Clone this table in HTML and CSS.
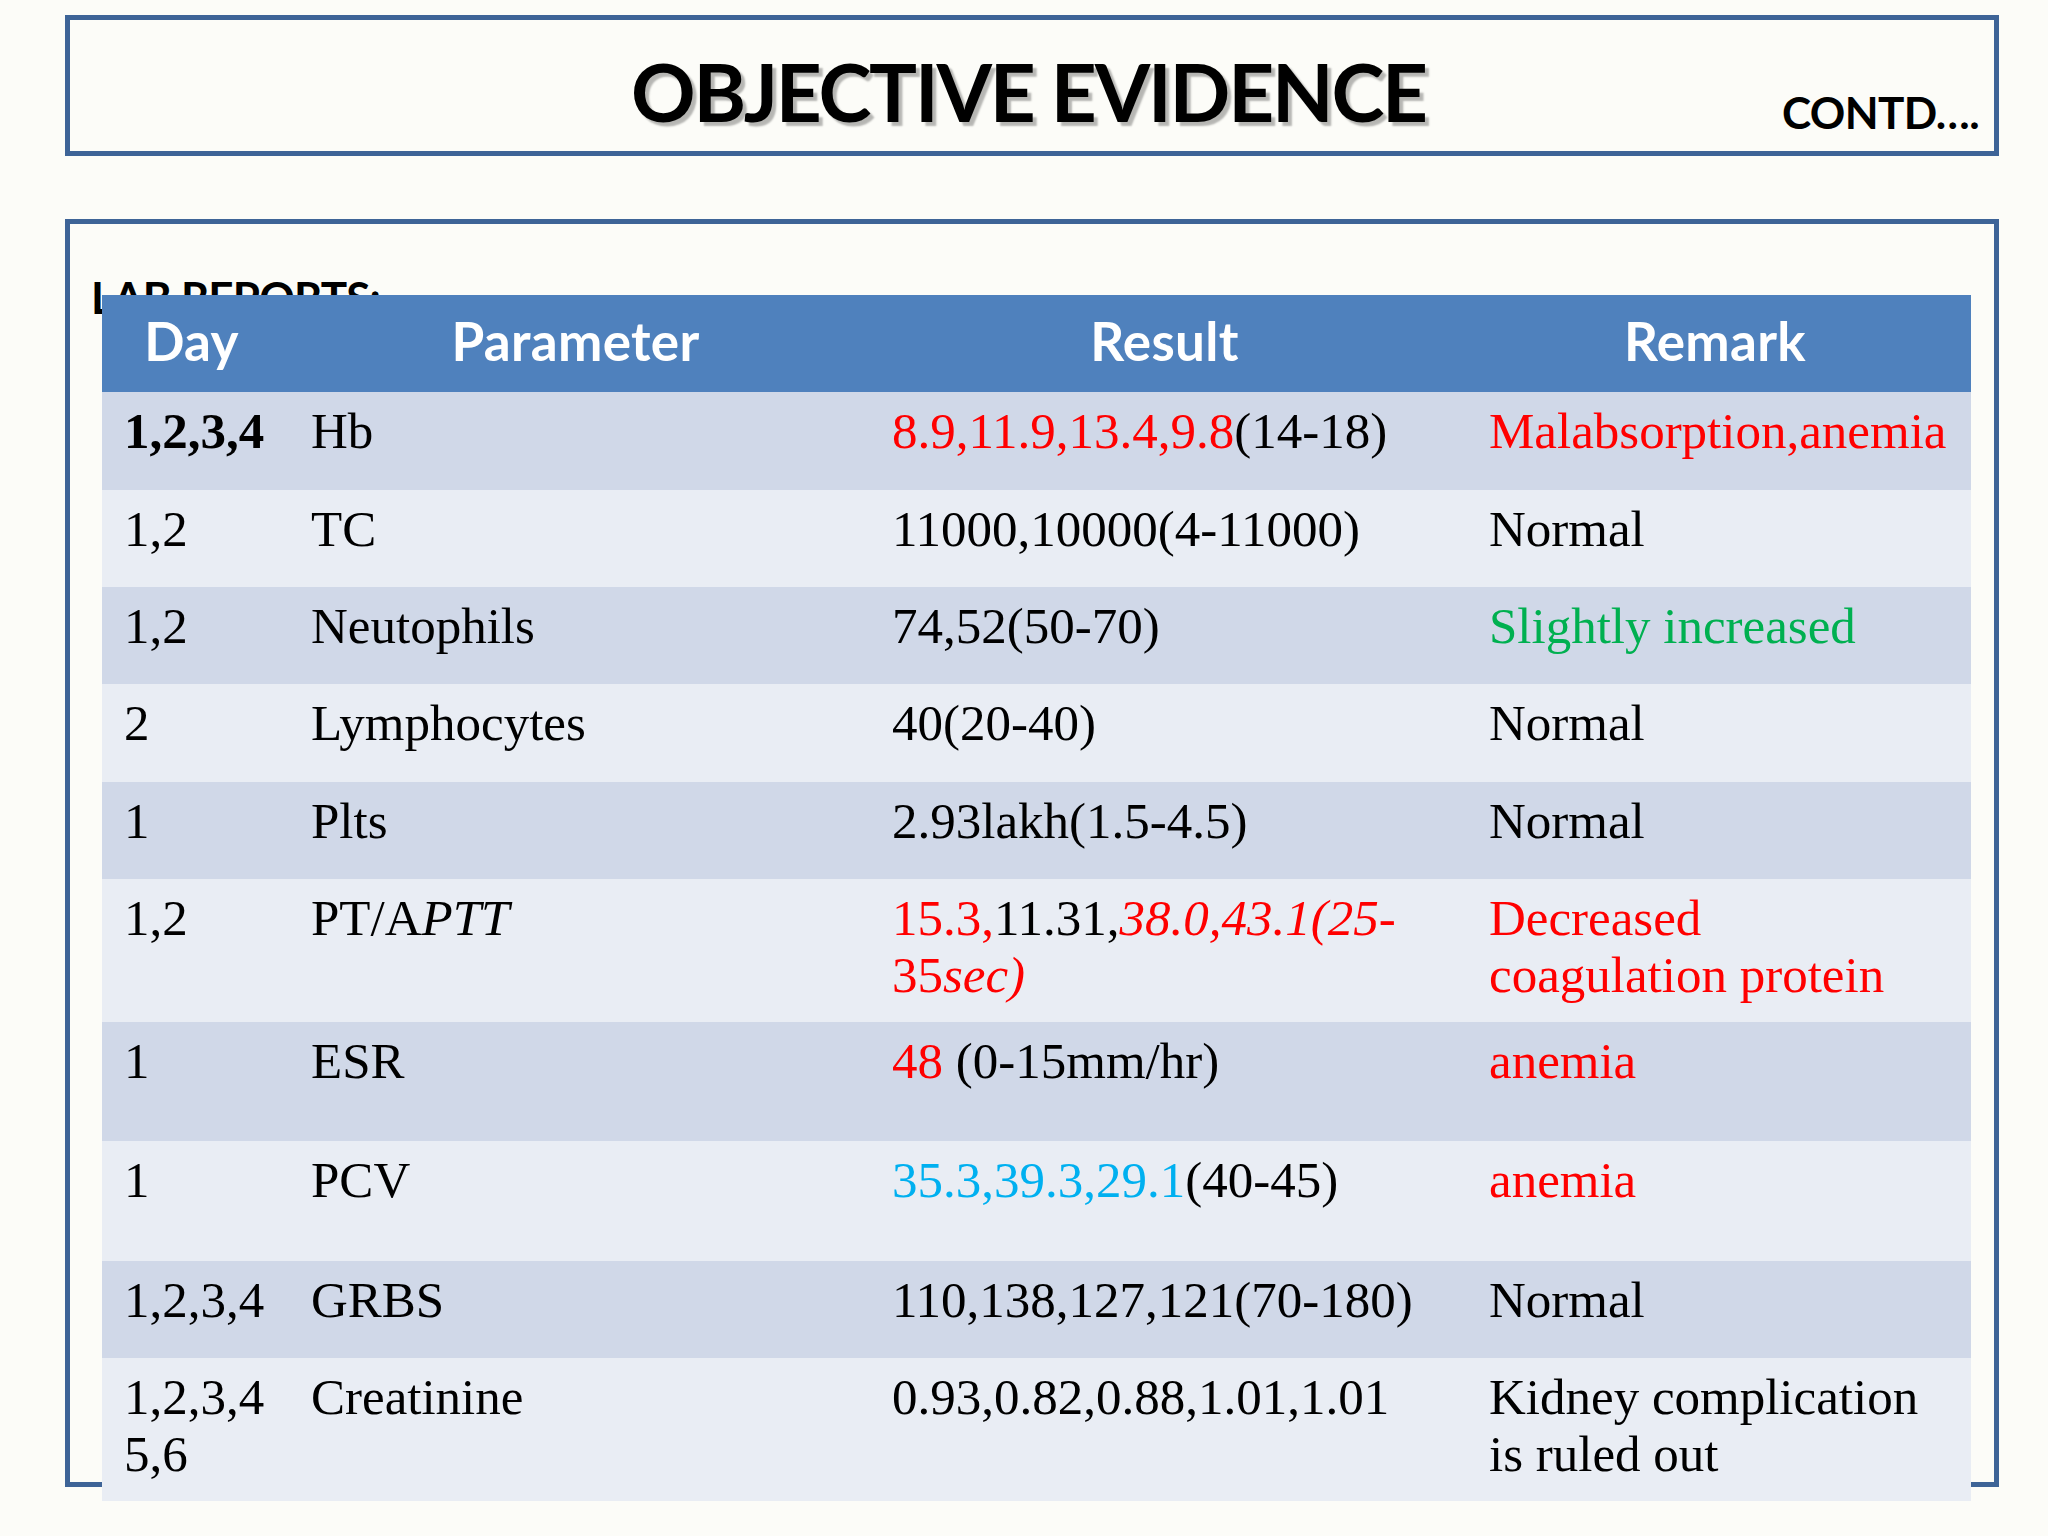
FILE: index.html
```html
<!DOCTYPE html>
<html lang="en">
<head>
<meta charset="utf-8">
<title>Objective Evidence</title>
<link rel="stylesheet" href="styles.css">
</head>
<body>
<div class="slide">
  <header class="title-box">
    <div class="title-spacer"></div>
    <h1 class="title">OBJECTIVE EVIDENCE</h1>
    <div class="contd">CONTD….</div>
  </header>

  <section class="content-box">
    <div class="lab-label">LAB REPORTS:</div>
    <table class="lab-table">
      <colgroup>
        <col class="c-day">
        <col class="c-param">
        <col class="c-result">
        <col class="c-remark">
      </colgroup>
      <thead>
        <tr class="head-row">
          <th>Day</th>
          <th>Parameter</th>
          <th>Result</th>
          <th>Remark</th>
        </tr>
      </thead>
      <tbody>
        <tr class="dark h98">
          <td><b>1,2,3,4</b></td>
          <td>Hb</td>
          <td class="nw"><span class="red">8.9,11.9,13.4,9.8</span>(14-18)</td>
          <td class="nw red">Malabsorption,anemia</td>
        </tr>
        <tr class="light h97">
          <td>1,2</td>
          <td>TC</td>
          <td class="nw">11000,10000(4-11000)</td>
          <td>Normal</td>
        </tr>
        <tr class="dark h97">
          <td>1,2</td>
          <td>Neutophils</td>
          <td>74,52(50-70)</td>
          <td class="nw green">Slightly increased</td>
        </tr>
        <tr class="light h98">
          <td>2</td>
          <td>Lymphocytes</td>
          <td>40(20-40)</td>
          <td>Normal</td>
        </tr>
        <tr class="dark h97">
          <td>1</td>
          <td>Plts</td>
          <td>2.93lakh(1.5-4.5)</td>
          <td>Normal</td>
        </tr>
        <tr class="light h143">
          <td>1,2</td>
          <td>PT/A<i>PTT</i></td>
          <td><span class="red">15.3,</span>11.31,<i class="red">38.0,43.1(25-</i><br><span class="red">35</span><i class="red">sec)</i></td>
          <td class="red">Decreased<br>coagulation protein</td>
        </tr>
        <tr class="dark h119">
          <td>1</td>
          <td>ESR</td>
          <td><span class="red">48</span> (0-15mm/hr)</td>
          <td class="red">anemia</td>
        </tr>
        <tr class="light h120">
          <td>1</td>
          <td>PCV</td>
          <td><span class="cyan">35.3,39.3,29.1</span>(40-45)</td>
          <td class="red">anemia</td>
        </tr>
        <tr class="dark h97">
          <td>1,2,3,4</td>
          <td>GRBS</td>
          <td class="nw">110,138,127,121(70-180)</td>
          <td>Normal</td>
        </tr>
        <tr class="light h143">
          <td>1,2,3,4<br>5,6</td>
          <td>Creatinine</td>
          <td class="nw">0.93,0.82,0.88,1.01,1.01</td>
          <td>Kidney complication<br>is ruled out</td>
        </tr>
      </tbody>
    </table>
  </section>
</div>
</body>
</html>
```

FILE: styles.css
```css
html, body {
  margin: 0;
  padding: 0;
  background: #fcfcf8;
}

.slide {
  width: 2048px;
  height: 1536px;
  padding: 15px 0 0 65px;
  box-sizing: border-box;
  background: #fcfcf8;
  overflow: hidden;
}

/* ---------- title box ---------- */
.title-box {
  box-sizing: border-box;
  width: 1934px;
  height: 141px;
  border: 5px solid #3e6497;
  display: grid;
  grid-template-columns: 1fr auto 1fr;
  align-items: start;
  padding: 0 15px 0 0;
}

.title {
  margin: 31px 0 0 8px;
  font-family: "Lato", "Open Sans", sans-serif;
  font-weight: 700;
  font-size: 80px;
  line-height: 80px;
  color: #000;
  letter-spacing: -2.2px;
  text-shadow: 4px 4px 2px rgba(0, 0, 0, 0.28);
  white-space: nowrap;
}

.contd {
  justify-self: end;
  margin-top: 70px;
  font-family: "Lato", "Open Sans", sans-serif;
  font-weight: 700;
  font-size: 44px;
  line-height: 45px;
  letter-spacing: -0.6px;
  color: #000;
  white-space: nowrap;
}

/* ---------- content box ---------- */
.content-box {
  box-sizing: border-box;
  margin-top: 63px;
  width: 1934px;
  height: 1268px;
  border: 5px solid #3e6497;
  padding: 50px 0 0 21px;
  overflow: visible;
}

.lab-label {
  font-family: "Lato", "Open Sans", sans-serif;
  font-weight: 700;
  font-size: 44px;
  line-height: 46px;
  letter-spacing: -0.8px;
  color: #000;
}

.lab-table {
  margin: -25px 0 0 11px;
  width: 1869px;
  border-collapse: collapse;
  table-layout: fixed;
  position: relative;
}

.c-day { width: 187px; }
.c-param { width: 581px; }
.c-result { width: 597px; }
.c-remark { width: 504px; }

.head-row {
  height: 97px;
  background: #4f81bd;
}

.head-row th {
  padding: 0 14px 6px 6px;
  font-family: "Lato", "Open Sans", sans-serif;
  font-weight: 700;
  font-size: 53px;
  line-height: 60px;
  letter-spacing: 0.3px;
  color: #fff;
  text-align: center;
  vertical-align: middle;
}

.lab-table td {
  padding: 11px 8px 0 22px;
  font-family: "Liberation Serif", "Times New Roman", serif;
  font-size: 51px;
  line-height: 57px;
  color: #000;
  vertical-align: top;
  text-align: left;
}

.lab-table td b { font-weight: 700; }
.lab-table td i { font-style: italic; }

.dark { background: #d0d8e8; }
.light { background: #e9edf4; }

.h97 { height: 97px; }
.h98 { height: 98px; }
.h119 { height: 119px; }
.h120 { height: 120px; }
.h143 { height: 143px; }

.nw { white-space: nowrap; }

.red { color: #ff0000; }
.lab-table td.red { color: #ff0000; }
.green, .lab-table td.green { color: #00b050; }
.cyan { color: #00b0f0; }
```
